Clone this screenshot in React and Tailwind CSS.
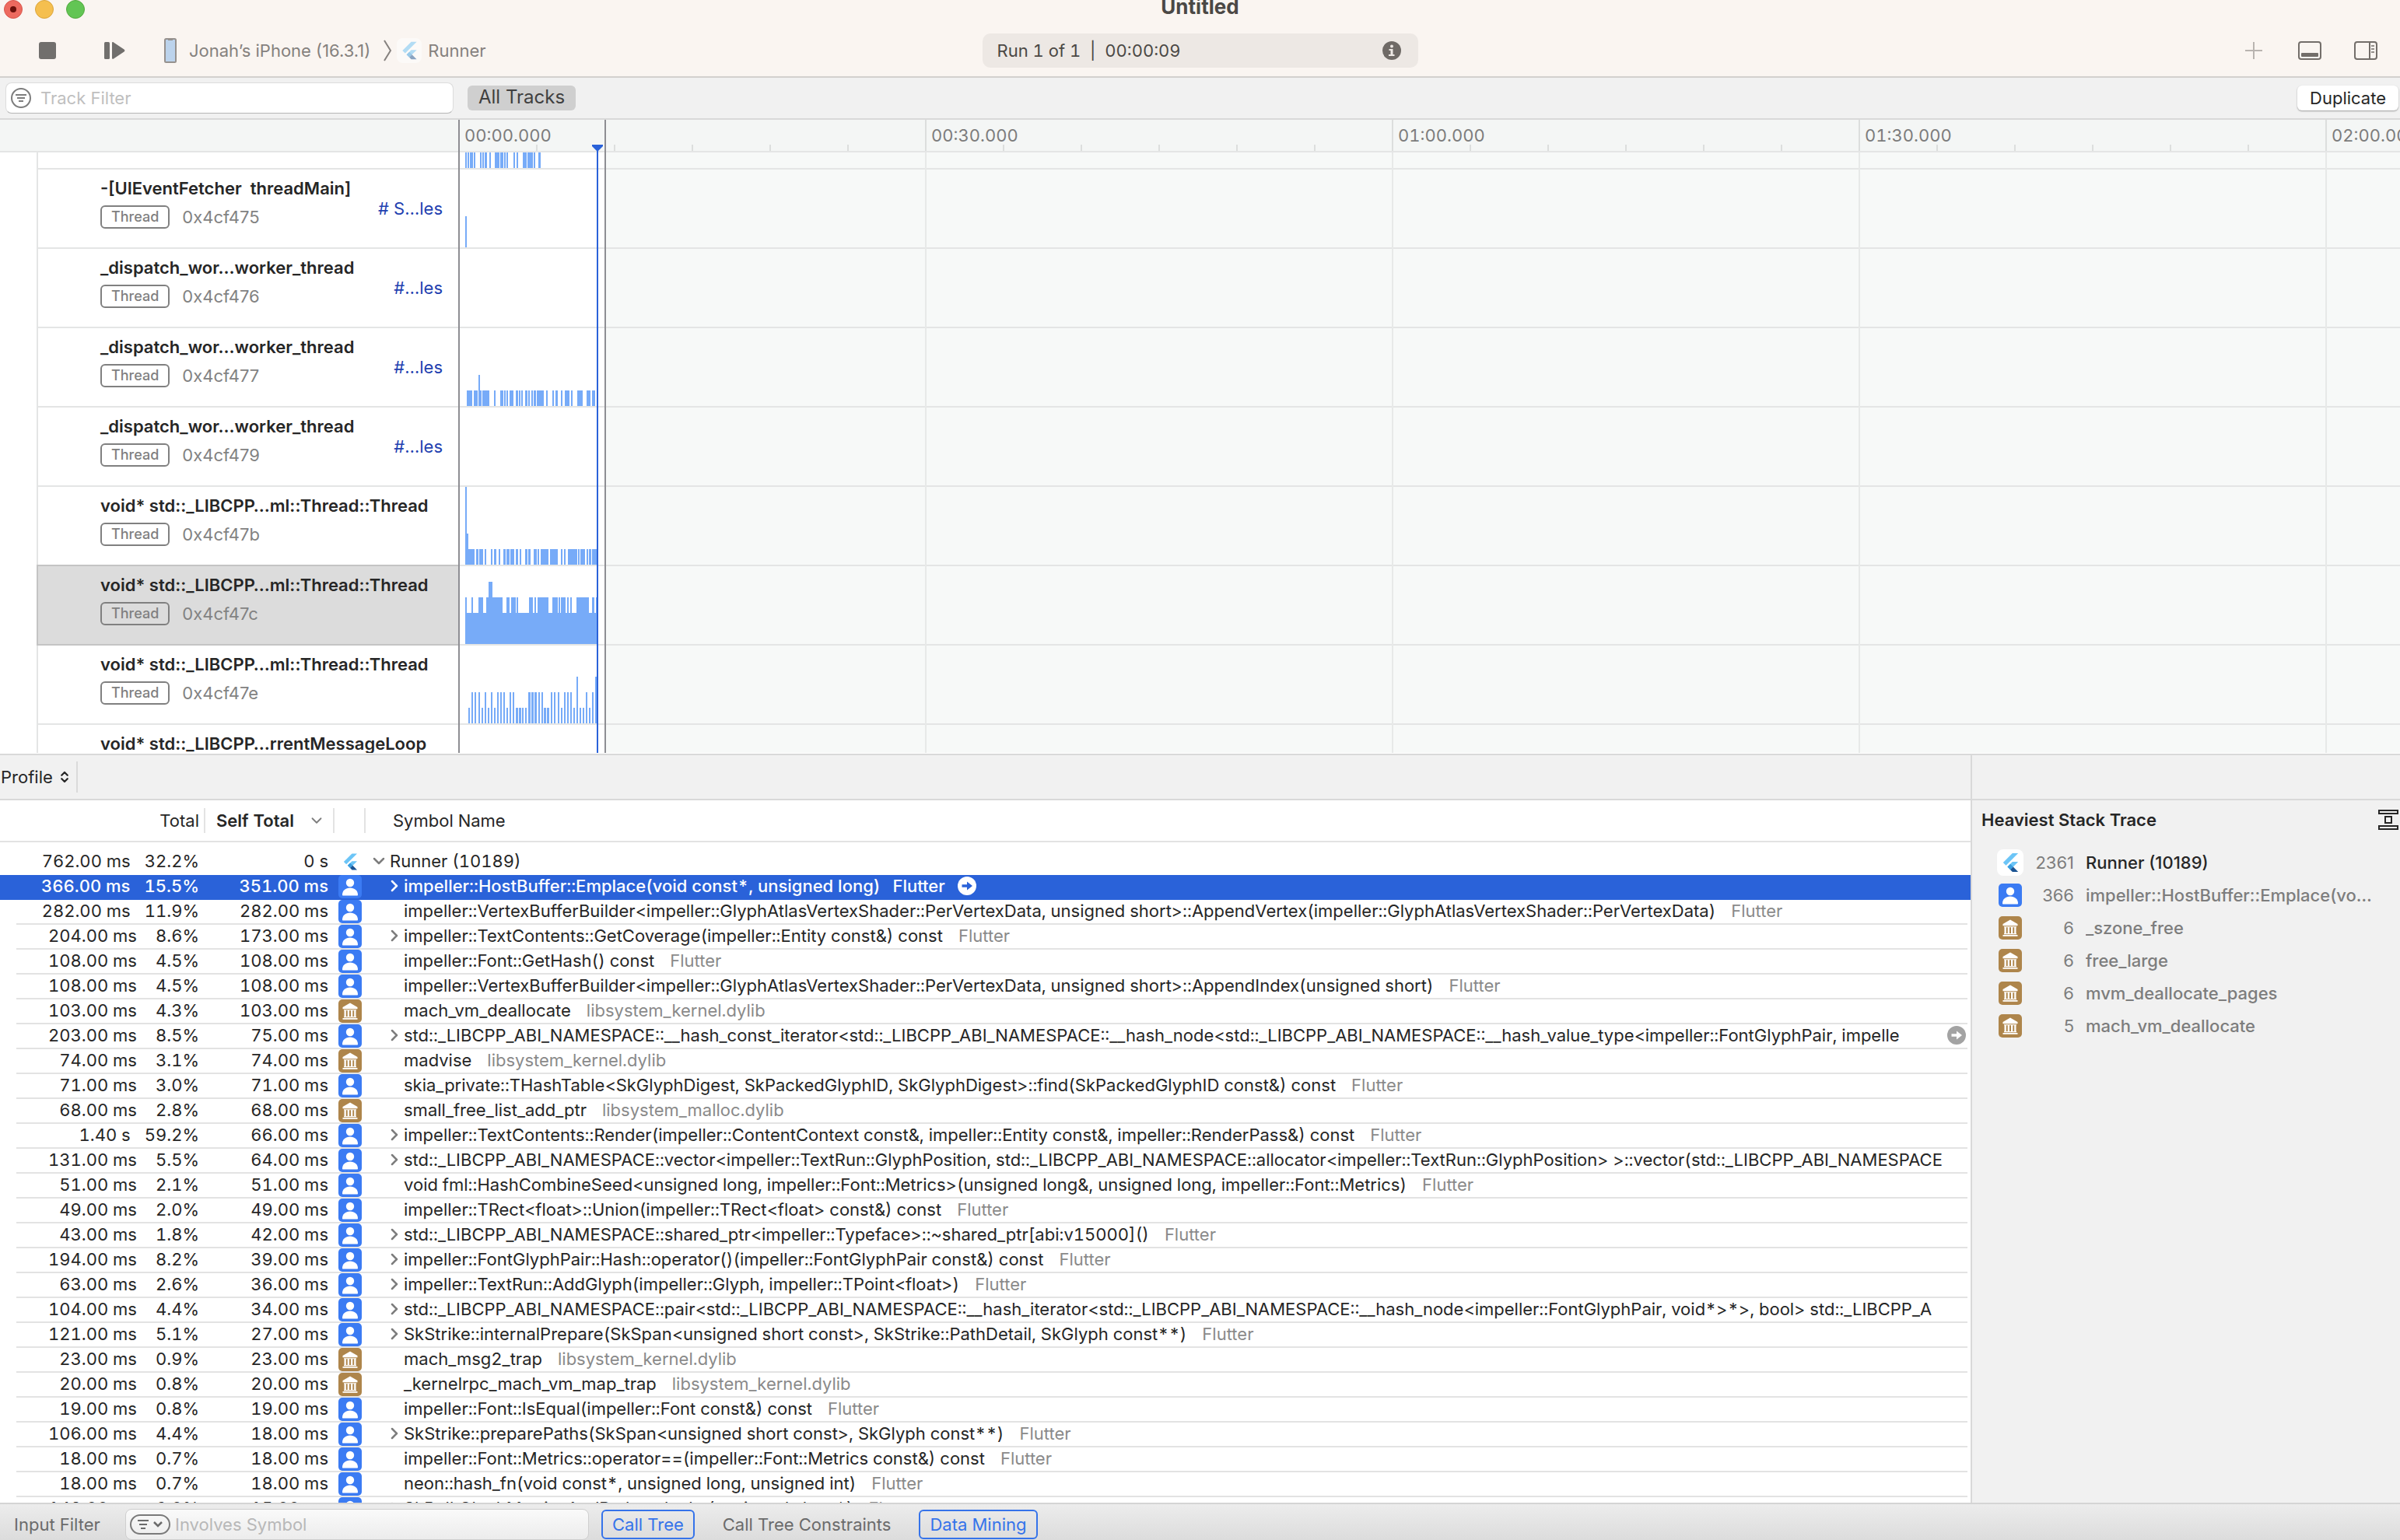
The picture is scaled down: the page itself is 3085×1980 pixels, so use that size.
import { ChevronDown, ChevronRight, ChevronsUpDown } from 'lucide-react';

const TRACKS = [
  {
    name: '-[UIEventFetcher  threadMain]',
    address: '0x4cf475',
    link: '# S…les',
    bars: [[7, 2, 40]],
  },
  { name: '_dispatch_wor…worker_thread', address: '0x4cf476', link: '#…les', bars: [] },
  {
    name: '_dispatch_wor…worker_thread',
    address: '0x4cf477',
    link: '#…les',
    bars: [
      [24, 2, 40], [9, 7, 20], [18, 5, 20], [24, 4, 20], [29, 9, 20], [44, 2, 20], [52, 4, 20], [57, 2, 20],
      [60, 2, 20], [64, 5, 20], [72, 3, 20], [76, 2, 20], [79, 2, 20], [84, 3, 20], [88, 2, 20], [92, 2, 20],
      [95, 3, 20], [99, 9, 20], [111, 2, 20], [119, 2, 20], [123, 3, 20], [130, 2, 20], [135, 6, 20],
      [143, 2, 20], [151, 7, 20], [163, 5, 20], [170, 4, 20],
    ],
  },
  { name: '_dispatch_wor…worker_thread', address: '0x4cf479', link: '#…les', bars: [] },
  {
    name: 'void* std::_LIBCPP…ml::Thread::Thread',
    address: '0x4cf47b',
    bars: [
      [7, 2, 100], [9, 2, 40], [11, 8, 20], [21, 3, 20], [25, 5, 20], [32, 2, 20], [40, 2, 20], [44, 3, 20],
      [50, 2, 20], [56, 3, 20], [60, 4, 20], [65, 5, 20], [72, 3, 20], [77, 2, 20], [84, 3, 20], [88, 3, 20],
      [95, 4, 20], [100, 2, 20], [104, 10, 20], [116, 10, 20], [130, 2, 20], [134, 2, 20], [139, 12, 20],
      [152, 2, 20], [155, 6, 20], [163, 2, 20], [166, 3, 20], [170, 6, 20],
    ],
  },
  {
    name: 'void* std::_LIBCPP…ml::Thread::Thread',
    address: '0x4cf47c',
    selected: true,
    bars: [
      [7, 169, 40], [7, 2, 60], [15, 2, 60], [24, 6, 60], [34, 21, 60], [37, 5, 80], [60, 4, 60], [66, 6, 60],
      [73, 2, 60], [89, 5, 60], [96, 2, 60], [100, 14, 60], [119, 7, 60], [127, 2, 60], [130, 6, 60],
      [138, 2, 60], [142, 2, 60], [150, 16, 60], [170, 3, 60], [175, 1, 60],
    ],
  },
  {
    name: 'void* std::_LIBCPP…ml::Thread::Thread',
    address: '0x4cf47e',
    bars: [
      [11, 2, 20], [15, 2, 40], [19, 2, 40], [24, 2, 40], [28, 2, 20], [32, 2, 40], [36, 2, 20], [40, 2, 40],
      [44, 2, 20], [48, 2, 40], [52, 2, 40], [56, 2, 40], [60, 2, 20], [64, 2, 40], [68, 2, 40], [72, 3, 20],
      [76, 3, 20], [80, 2, 20], [84, 2, 20], [88, 3, 40], [92, 3, 40], [96, 3, 40], [101, 2, 40], [105, 2, 40],
      [108, 3, 20], [112, 3, 20], [117, 2, 40], [121, 2, 40], [126, 2, 40], [130, 2, 20], [134, 2, 40],
      [138, 2, 40], [142, 2, 40], [146, 2, 20], [150, 2, 60], [154, 2, 20], [158, 2, 20], [162, 2, 40],
      [166, 2, 20], [170, 2, 40], [174, 2, 60],
    ],
  },
];

const TOP_BARS = [
  [7, 2, 20], [10, 2, 20], [13, 4, 20], [18, 2, 20], [26, 2, 20], [29, 2, 20], [32, 3, 20], [38, 2, 20],
  [45, 6, 20], [52, 4, 20], [57, 2, 20], [60, 2, 20], [69, 2, 20], [73, 2, 20], [81, 5, 20], [87, 7, 20],
  [95, 2, 20], [101, 3, 20],
];

const TIMES = ['00:00.000', '00:30.000', '01:00.000', '01:30.000', '02:00.000'];

const ROWS = [
  { total: '282.00 ms', pct: '11.9%', self: '282.00 ms', icon: 'user', name: 'impeller::VertexBufferBuilder<impeller::GlyphAtlasVertexShader::PerVertexData, unsigned short>::AppendVertex(impeller::GlyphAtlasVertexShader::PerVertexData)', lib: 'Flutter' },
  { total: '204.00 ms', pct: '8.6%', self: '173.00 ms', icon: 'user', open: true, name: 'impeller::TextContents::GetCoverage(impeller::Entity const&) const', lib: 'Flutter' },
  { total: '108.00 ms', pct: '4.5%', self: '108.00 ms', icon: 'user', name: 'impeller::Font::GetHash() const', lib: 'Flutter' },
  { total: '108.00 ms', pct: '4.5%', self: '108.00 ms', icon: 'user', name: 'impeller::VertexBufferBuilder<impeller::GlyphAtlasVertexShader::PerVertexData, unsigned short>::AppendIndex(unsigned short)', lib: 'Flutter' },
  { total: '103.00 ms', pct: '4.3%', self: '103.00 ms', icon: 'system', name: 'mach_vm_deallocate', lib: 'libsystem_kernel.dylib' },
  { total: '203.00 ms', pct: '8.5%', self: '75.00 ms', icon: 'user', open: true, focus: true, name: 'std::_LIBCPP_ABI_NAMESPACE::__hash_const_iterator<std::_LIBCPP_ABI_NAMESPACE::__hash_node<std::_LIBCPP_ABI_NAMESPACE::__hash_value_type<impeller::FontGlyphPair, impelle' },
  { total: '74.00 ms', pct: '3.1%', self: '74.00 ms', icon: 'system', name: 'madvise', lib: 'libsystem_kernel.dylib' },
  { total: '71.00 ms', pct: '3.0%', self: '71.00 ms', icon: 'user', name: 'skia_private::THashTable<SkGlyphDigest, SkPackedGlyphID, SkGlyphDigest>::find(SkPackedGlyphID const&) const', lib: 'Flutter' },
  { total: '68.00 ms', pct: '2.8%', self: '68.00 ms', icon: 'system', name: 'small_free_list_add_ptr', lib: 'libsystem_malloc.dylib' },
  { total: '1.40 s', pct: '59.2%', self: '66.00 ms', icon: 'user', open: true, name: 'impeller::TextContents::Render(impeller::ContentContext const&, impeller::Entity const&, impeller::RenderPass&) const', lib: 'Flutter' },
  { total: '131.00 ms', pct: '5.5%', self: '64.00 ms', icon: 'user', open: true, name: 'std::_LIBCPP_ABI_NAMESPACE::vector<impeller::TextRun::GlyphPosition, std::_LIBCPP_ABI_NAMESPACE::allocator<impeller::TextRun::GlyphPosition> >::vector(std::_LIBCPP_ABI_NAMESPACE' },
  { total: '51.00 ms', pct: '2.1%', self: '51.00 ms', icon: 'user', name: 'void fml::HashCombineSeed<unsigned long, impeller::Font::Metrics>(unsigned long&, unsigned long, impeller::Font::Metrics)', lib: 'Flutter' },
  { total: '49.00 ms', pct: '2.0%', self: '49.00 ms', icon: 'user', name: 'impeller::TRect<float>::Union(impeller::TRect<float> const&) const', lib: 'Flutter' },
  { total: '43.00 ms', pct: '1.8%', self: '42.00 ms', icon: 'user', open: true, name: 'std::_LIBCPP_ABI_NAMESPACE::shared_ptr<impeller::Typeface>::~shared_ptr[abi:v15000]()', lib: 'Flutter' },
  { total: '194.00 ms', pct: '8.2%', self: '39.00 ms', icon: 'user', open: true, name: 'impeller::FontGlyphPair::Hash::operator()(impeller::FontGlyphPair const&) const', lib: 'Flutter' },
  { total: '63.00 ms', pct: '2.6%', self: '36.00 ms', icon: 'user', open: true, name: 'impeller::TextRun::AddGlyph(impeller::Glyph, impeller::TPoint<float>)', lib: 'Flutter' },
  { total: '104.00 ms', pct: '4.4%', self: '34.00 ms', icon: 'user', open: true, name: 'std::_LIBCPP_ABI_NAMESPACE::pair<std::_LIBCPP_ABI_NAMESPACE::__hash_iterator<std::_LIBCPP_ABI_NAMESPACE::__hash_node<impeller::FontGlyphPair, void*>*>, bool> std::_LIBCPP_A' },
  { total: '121.00 ms', pct: '5.1%', self: '27.00 ms', icon: 'user', open: true, name: 'SkStrike::internalPrepare(SkSpan<unsigned short const>, SkStrike::PathDetail, SkGlyph const**)', lib: 'Flutter' },
  { total: '23.00 ms', pct: '0.9%', self: '23.00 ms', icon: 'system', name: 'mach_msg2_trap', lib: 'libsystem_kernel.dylib' },
  { total: '20.00 ms', pct: '0.8%', self: '20.00 ms', icon: 'system', name: '_kernelrpc_mach_vm_map_trap', lib: 'libsystem_kernel.dylib' },
  { total: '19.00 ms', pct: '0.8%', self: '19.00 ms', icon: 'user', name: 'impeller::Font::IsEqual(impeller::Font const&) const', lib: 'Flutter' },
  { total: '106.00 ms', pct: '4.4%', self: '18.00 ms', icon: 'user', open: true, name: 'SkStrike::preparePaths(SkSpan<unsigned short const>, SkGlyph const**)', lib: 'Flutter' },
  { total: '18.00 ms', pct: '0.7%', self: '18.00 ms', icon: 'user', name: 'impeller::Font::Metrics::operator==(impeller::Font::Metrics const&) const', lib: 'Flutter' },
  { total: '18.00 ms', pct: '0.7%', self: '18.00 ms', icon: 'user', name: 'neon::hash_fn(void const*, unsigned long, unsigned int)', lib: 'Flutter' },
  { total: '142.00 ms', pct: '6.0%', self: '15.00 ms', icon: 'user', open: true, name: 'SkBulkGlyphMetricsAndPaths::glyphs(unsigned short*)', lib: 'Flutter' },
];

const STACK = [
  { icon: 'user', count: 366, name: 'impeller::HostBuffer::Emplace(void const*, unsigned long)' },
  { icon: 'system', count: 6, name: '_szone_free' },
  { icon: 'system', count: 6, name: 'free_large' },
  { icon: 'system', count: 6, name: 'mvm_deallocate_pages' },
  { icon: 'system', count: 5, name: 'mach_vm_deallocate' },
];

function FlutterIcon({ className }) {
  return (
    <svg viewBox="0 0 34 34" className={className}>
      <rect width="34" height="34" rx="8" fill="#fff" />
      <g transform="translate(5.5 5)">
        <path fill="#6cc5f7" d="M14.3 0 2.3 12 6 15.7 21.7 0z" />
        <path fill="#6cc5f7" d="M14.3 11.1 7.9 17.5l3.7 3.7 10.1-10.1z" />
        <path fill="#3a9ee0" d="m7.9 17.5 3.7-3.7 3.7 3.7-3.7 3.7z" />
        <path fill="#1c5493" d="m11.6 21.2 3.7-3.7 6.4 6.5h-7.4z" />
      </g>
    </svg>
  );
}

function SymbolIcon({ kind }) {
  if (kind === 'flutter') return <FlutterIcon className="block size-[30px] shrink-0" />;
  if (kind === 'user') {
    return (
      <svg viewBox="0 0 30 30" className="block size-[30px] shrink-0">
        <rect width="30" height="30" rx="5" fill="#3b7bf3" />
        <circle cx="15" cy="10" r="5.2" fill="#fff" />
        <path fill="#fff" d="M5 25.5c0-5.5 4.2-9 10-9s10 3.500 10 9c0 .6-.4 1-1 1H6c-.6 0-1-.4-1-1z" />
      </svg>
    );
  }
  return (
    <svg viewBox="0 0 30 30" className="block size-[30px] shrink-0">
      <rect width="30" height="30" rx="5" fill="#ae854b" />
      <path fill="#fff" d="M15 4.500 24.500 10v2.200h-19V10zM7 13.300h16v1H7zM7.500 14h2.300v8.500H7.500zM11.700 14H14v8.500h-2.300zM16 14h2.300v8.500H16zM20.200 14h2.300v8.500h-2.300zM7 22h16v1.200H7zM5.500 24h19v1.800h-19z" />
    </svg>
  );
}

function FocusArrow({ className }) {
  return (
    <svg viewBox="0 0 24 24" className={className}>
      <circle cx="12" cy="12" r="12" fill="currentColor" />
      <path className="fill-(--arrow)" d="M5.500 10.200h6.500V6.500l7 5.500-7 5.500v-3.700H5.500z" />
    </svg>
  );
}

function Bars({ bars, height }) {
  return (
    <svg width="186" height={height} className="block shrink-0 bg-white" fill="#77abf8" shapeRendering="crispEdges">
      {bars.map(([x, w, h], i) => (
        <rect key={i} x={x} y={height - h} width={w} height={h} />
      ))}
    </svg>
  );
}

function Toolbar() {
  return (
    <header className="border-b-2 border-[#d3d0ce] bg-[#faf5f1]">
      <div className="grid h-5 grid-cols-[1fr_auto_1fr] items-center">
        <div className="flex gap-4 pl-[5px]">
          <button aria-label="Close" className="flex size-6 items-center justify-center rounded-full border border-[#d9564c] bg-[#ed6a5f]">
            <span className="size-2 rounded-full bg-[#6b110b]" />
          </button>
          <button aria-label="Minimize" className="size-6 rounded-full border border-[#dba53c] bg-[#f5bf4f]" />
          <button aria-label="Zoom" className="size-6 rounded-full border border-[#52a93f] bg-[#62c554]" />
        </div>
        <h1 className="self-start text-[26px] leading-[18px] font-bold text-[#4b4845]">Untitled</h1>
      </div>

      <div className="mt-3 grid h-[66px] grid-cols-[1fr_560px_1fr] items-center text-[#85817e]">
        <div className="flex items-center">
          <button aria-label="Stop" className="ml-[50px] size-[22px] rounded-[3px] bg-[#716f6d]" />
          <button aria-label="Pause" className="ml-[62px] text-[#716f6d]">
            <svg width="27" height="22" viewBox="0 0 27 22" fill="currentColor" className="block">
              <rect width="7" height="22" rx="1.500" />
              <path d="M10 1.500c0-1.300 1-1.800 2-1l13.500 9c1.200.8 1.200 2.200 0 3l-13.500 9c-1 .8-2 .3-2-1z" />
            </svg>
          </button>
          <svg width="16" height="32" viewBox="0 0 16 32" className="ml-[50px] block">
            <rect x="1" y="1" width="14" height="30" rx="1.500" fill="#bcd3ec" stroke="#96918e" strokeWidth="2" />
            <rect x="5" y="1" width="6" height="2" fill="#96918e" />
          </svg>
          <span className="ml-4 text-[22px]">Jonah’s iPhone (16.3.1)</span>
          <svg width="12" height="28" viewBox="0 0 12 28" fill="none" stroke="currentColor" strokeWidth="2" className="ml-4 block">
            <path d="M2 1l8 13-8 13" />
          </svg>
          <FlutterIcon className="ml-1.5 block size-8 opacity-50" />
          <span className="ml-2 text-[22px]">Runner</span>
        </div>

        <div className="flex h-11 items-center justify-between rounded-[10px] bg-[#ede8e4] pr-[22px] pl-[19px]">
          <span className="text-[22px] whitespace-pre text-[#4b4845] tabular-nums">Run 1 of 1  |  00:00:09</span>
          <button aria-label="Run info">
            <svg width="24" height="24" viewBox="0 0 24 24" className="block">
              <circle cx="12" cy="12" r="12" fill="#6f6a66" />
              <circle cx="12" cy="6.500" r="2" fill="#ede8e4" />
              <path fill="#ede8e4" d="M8.500 10h5v7h2v2h-7.500v-2h2.500v-5h-2z" />
            </svg>
          </button>
        </div>

        <div className="flex items-center justify-end gap-[42px] pr-[29px] text-[#736e6a]">
          <button aria-label="Add instrument" className="mr-1 text-[#b9b4b0]">
            <svg width="22" height="22" viewBox="0 0 22 22" stroke="currentColor" strokeWidth="2" className="block">
              <path d="M11 0v22M0 11h22" />
            </svg>
          </button>
          <button aria-label="Toggle detail area">
            <svg width="30" height="24" viewBox="0 0 30 24" fill="none" className="block">
              <rect x="1" y="1" width="28" height="22" rx="3" stroke="currentColor" strokeWidth="2" />
              <rect x="4" y="15" width="22" height="5" rx="1" fill="currentColor" />
            </svg>
          </button>
          <button aria-label="Toggle inspector">
            <svg width="30" height="24" viewBox="0 0 30 24" fill="none" stroke="currentColor" strokeWidth="2" className="block">
              <rect x="1" y="1" width="28" height="22" rx="3" />
              <path d="M20 1v22" />
              <path strokeWidth="1.500" d="M22 6h4M22 10h4M22 14h4" />
            </svg>
          </button>
        </div>
      </div>
    </header>
  );
}

function FilterBar() {
  return (
    <div className="flex h-[54px] items-center justify-between border-b-2 border-[#d9d9d9] bg-[#f1f1f1] pr-0.5 pl-[7px]">
      <div className="flex items-center gap-[18px]">
        <label className="flex h-10 w-[576px] items-center gap-3 rounded-lg border border-[#dcdcdc] border-b-[#b5b5b5] bg-white pl-1.5">
          <svg width="26" height="26" viewBox="0 0 26 26" fill="none" stroke="#7d7d7d" strokeWidth="2" className="block shrink-0">
            <circle cx="13" cy="13" r="12" />
            <path d="M6 9h14M8 13h10M10 17h6" />
          </svg>
          <input aria-label="Track filter" placeholder="Track Filter" className="min-w-0 flex-1 text-[22px] outline-none placeholder:text-[#bfbfbf]" />
        </label>
        <button className="h-8 rounded-md bg-[#cfcfcf] px-3.5 pb-0.5 text-2xl leading-[30px] text-[#3f3f3f]">All Tracks</button>
      </div>
      <button className="h-8 rounded-md bg-white px-4 text-[22px] leading-8 text-[#262626] shadow-[0_1px_2px_rgba(0,0,0,0.35)]">Duplicate</button>
    </div>
  );
}

function Timeline() {
  return (
    <section className="relative overflow-hidden border-b-2 border-[#d9d9d9] bg-white pb-px">
      {/* Ruler */}
      <div className="flex h-[42px] border-b-2 border-[#e4e5e5] bg-[#f4f6f5] text-[22px] text-[#7c7c7c]">
        <div className="w-[589px] shrink-0" />
        <div className="flex min-w-0 flex-1 overflow-hidden">
          {TIMES.map((time) => (
            <div key={time} className="flex w-[600px] shrink-0 flex-col justify-between border-l-2 border-[#dcdedd]">
              <span className="h-8 pt-[5px] pl-1.5 leading-[30px] tabular-nums">{time}</span>
              <div className="flex h-2">
                <span className="w-[98px] shrink-0" />
                <span className="w-[100px] border-l-2 border-[#dcdedd]" />
                <span className="w-[100px] border-l-2 border-[#dcdedd]" />
                <span className="w-[100px] border-l-2 border-[#dcdedd]" />
                <span className="w-[100px] border-l-2 border-[#dcdedd]" />
                <span className="w-[100px] border-l-2 border-[#dcdedd]" />
              </div>
            </div>
          ))}
        </div>
      </div>

      {/* Tracks */}
      <div className="relative">
        <div className="flex">
          <div className="w-[47px] shrink-0" />
          <div className="w-[544px] shrink-0 border-b-2 border-l-2 border-[#e4e5e5]" />
          <div className="flex flex-1 border-b-2 border-[#e4e5e5] bg-[#f7f9f8]">
            <Bars bars={TOP_BARS} height={20} />
          </div>
        </div>
        {TRACKS.map((track) => (
          <div key={track.address} className="flex">
            <div className="w-[47px] shrink-0" />
            <div
              className={`flex w-[544px] shrink-0 items-center justify-between border-b-2 border-l-2 pr-[22px] pl-20 ${
                track.selected ? 'border-[#c4c4c4] bg-[#dcdcdc] shadow-[0_-2px_0_#c4c4c4]' : 'border-[#e4e5e5]'
              }`}
            >
              <div className="h-[100px] pt-2.5 whitespace-pre">
                <div className="text-[22px] leading-7 font-semibold text-[#262626]">{track.name}</div>
                <div className="mt-2 flex items-center gap-4">
                  <span className="h-[30px] rounded-md border-2 border-[#808080] px-3 text-lg leading-[26px] font-medium text-[#808080]">Thread</span>
                  <span className="text-[22px] leading-[30px] text-[#828282]">{track.address}</span>
                </div>
              </div>
              {track.link && <a href="#samples" className="text-[22px] text-[#1f41b0]">{track.link}</a>}
            </div>
            <div className="flex flex-1 border-b-2 border-[#e4e5e5] bg-[#f7f9f8]">
              <Bars bars={track.bars} height={100} />
            </div>
          </div>
        ))}
        <div className="flex h-9 overflow-hidden">
          <div className="w-[47px] shrink-0" />
          <div className="w-[544px] shrink-0 border-l-2 border-[#e4e5e5] pt-2.5 pl-20 text-[22px] leading-7 font-semibold text-[#262626]">
            void* std::_LIBCPP…rrentMessageLoop
          </div>
          <div className="flex flex-1 bg-[#f7f9f8]">
            <Bars bars={[]} height={36} />
          </div>
        </div>

        {/* Minute grid over the lanes */}
        <div className="pointer-events-none absolute inset-y-0 right-0 left-[589px] flex overflow-hidden">
          {TIMES.map((time, i) => (
            <div key={time} className={`w-[600px] shrink-0 ${i > 0 ? 'border-l-2 border-[#e7e9e8]' : ''}`} />
          ))}
        </div>
      </div>

      {/* Run bounds and playhead */}
      <div className="absolute top-0 bottom-px left-[589px] w-[190px] border-x-2 border-[#8e8e93]" />
      <div className="absolute top-8 bottom-px left-[761px] flex w-3.5 flex-col items-center">
        <svg width="14" height="8" viewBox="0 0 14 8" fill="#2a62d9" className="block shrink-0">
          <path d="M0 0h14v2L8 8H6L0 2z" />
        </svg>
        <div className="w-0.5 flex-1 bg-[#2a62d9]" />
      </div>
    </section>
  );
}

function Cells({ row, selected }) {
  const line = selected ? 'border-b-2 border-[#2a62d9]' : 'border-b-2 border-[#e3e3e3]';
  return (
    <>
      <td />
      <td className={`pr-2 text-right ${line}`}>
        {row.total}
        <span className={row.pct.length > 4 ? 'ml-[18px]' : 'ml-6'}>{row.pct}</span>
      </td>
      <td className={`pr-2 text-right ${line}`}>{row.self}</td>
      <td className={`pl-[5px] ${line}`}>
        <SymbolIcon kind={row.icon} />
      </td>
      <td className={line}>
        <div className="flex items-center">
          <span className={`flex w-[49px] shrink-0 justify-end ${selected ? 'text-white' : 'text-[#7d7d7d]'}`}>
            {row.open && <ChevronRight className="size-6" strokeWidth={2.5} />}
          </span>
          <span className={row.focus ? 'min-w-0 flex-1 overflow-hidden' : ''}>{row.name}</span>
          {row.lib && <span className={selected ? 'ml-4' : 'ml-5 text-[#8a8a8a]'}>{row.lib}</span>}
          {selected && <FocusArrow className="ml-4 size-6 text-white [--arrow:#2a62d9]" />}
          {row.focus && <FocusArrow className="mr-0.5 size-6 shrink-0 text-[#a3a3a3] [--arrow:#fff]" />}
        </div>
      </td>
      <td />
    </>
  );
}

function CallTree() {
  return (
    <table className="w-full table-fixed border-separate border-spacing-0 text-[22px] leading-7 whitespace-nowrap text-[#262626] tabular-nums [&_td]:h-8 [&_td]:overflow-hidden [&_td]:py-0 [&_td]:align-top">
      <colgroup>
        <col className="w-[21px]" />
        <col className="w-[243px]" />
        <col className="w-[166px]" />
        <col className="w-10" />
        <col />
        <col className="w-1" />
      </colgroup>
      <thead className="[&_th]:h-[54px] [&_th]:border-b-2 [&_th]:border-[#e3e3e3] [&_th]:p-0 [&_th]:font-normal">
        <tr>
          <th />
          <th><div className="border-r-2 border-[#e3e3e3] pr-1.5 text-right leading-8">Total</div></th>
          <th>
            <div className="flex items-center justify-between border-r-2 border-[#e3e3e3] pr-2.5 pl-3.5 leading-8 font-semibold">
              Self Total
              <ChevronDown className="size-[22px] text-[#7d7d7d]" />
            </div>
          </th>
          <th><div className="h-8 border-r-2 border-[#e3e3e3]" /></th>
          <th className="text-left"><div className="pl-[35px]">Symbol Name</div></th>
          <th />
        </tr>
      </thead>
      <tbody>
        <tr>
          <td colSpan={6} className="h-2.5!" />
        </tr>
        <tr>
          <td />
          <td className="pr-2 text-right">762.00 ms<span className="ml-[18px]">32.2%</span></td>
          <td className="pr-2 text-right">0 s</td>
          <td className="pl-[5px]"><SymbolIcon kind="flutter" /></td>
          <td>
            <div className="flex items-center pl-[5px]">
              <ChevronDown className="mr-0.5 size-6 text-[#7d7d7d]" strokeWidth={2.5} />
              Runner (10189)
            </div>
          </td>
          <td />
        </tr>
        <tr className="bg-[#2a62d9] font-medium text-white">
          <Cells
            selected
            row={{ total: '366.00 ms', pct: '15.5%', self: '351.00 ms', icon: 'user', open: true, name: 'impeller::HostBuffer::Emplace(void const*, unsigned long)', lib: 'Flutter' }}
          />
        </tr>
        {ROWS.map((row) => (
          <tr key={row.name}>
            <Cells row={row} />
          </tr>
        ))}
      </tbody>
    </table>
  );
}

function StackTrace() {
  return (
    <aside className="w-[552px] shrink-0 border-l-2 border-[#d9d9d9] bg-[#f1f1f1] text-[22px]">
      <div className="flex h-[50px] items-center justify-between pr-0.5 pl-3">
        <h2 className="font-semibold text-[#262626]">Heaviest Stack Trace</h2>
        <button aria-label="Collapse stack">
          <svg width="26" height="26" viewBox="0 0 26 26" fill="none" stroke="#262626" strokeWidth="2" className="block">
            <path d="M1 1h24v4H1zM1 21h24v4H1zM9 9h8v8H9z" />
          </svg>
        </button>
      </div>
      <ul className="pt-[9px] font-medium text-[#7d7d7d]">
        <li className="flex h-[42px] items-center pl-8">
          <FlutterIcon className="block size-[34px]" />
          <span className="w-[65px] text-right font-normal">2361</span>
          <span className="ml-[15px] text-[#262626]">Runner (10189)</span>
        </li>
        {STACK.map((frame) => (
          <li key={frame.name} className="flex h-[42px] items-center pr-9 pl-[34px]">
            <SymbolIcon kind={frame.icon} />
            <span className="w-[67px] shrink-0 text-right font-normal">{frame.count}</span>
            <span className="ml-[15px] truncate">{frame.name}</span>
          </li>
        ))}
      </ul>
    </aside>
  );
}

function BottomBar() {
  return (
    <footer className="flex h-12 shrink-0 items-center border-t-2 border-[#d4d4d4] bg-linear-to-b from-[#ececec] to-[#dcdcdc] pt-1.5 text-[22px] text-[#6b6b6b]">
      <label htmlFor="input-filter" className="ml-[18px] w-[143px]">Input Filter</label>
      <div className="flex h-10 w-[596px] items-center gap-1.5 rounded-lg border border-[#cfcfcf] bg-linear-to-b from-[#fafafa] to-[#ececec] pl-[5px]">
        <button aria-label="Filter options" className="flex h-[26px] w-[52px] items-center justify-center gap-1.5 rounded-full border-2 border-[#7a7a7a]">
          <svg width="14" height="12" viewBox="0 0 14 12" stroke="#6b6b6b" strokeWidth="2">
            <path d="M0 1h14M2 6h10M4 11h6" />
          </svg>
          <svg width="12" height="8" viewBox="0 0 12 8" fill="none" stroke="#6b6b6b" strokeWidth="2.500">
            <path d="m1 1 5 5 5-5" />
          </svg>
        </button>
        <input id="input-filter" placeholder="Involves Symbol" className="min-w-0 flex-1 outline-none placeholder:text-[#b8b8b8]" />
      </div>
      <button className="ml-4 h-[38px] rounded-md border-2 border-[#3573ea] px-3 text-[#3573ea]">Call Tree</button>
      <button className="mx-9 h-[38px]">Call Tree Constraints</button>
      <button className="h-[38px] rounded-md border-2 border-[#3573ea] px-3 text-[#3573ea]">Data Mining</button>
    </footer>
  );
}

export default function App() {
  return (
    <div className="flex h-screen flex-col overflow-hidden bg-white font-[Inter,sans-serif]">
      <Toolbar />
      <FilterBar />
      <Timeline />
      <div className="flex h-[58px] shrink-0 border-b-2 border-[#d9d9d9] bg-[#f1f1f1]">
        <div className="flex flex-1 items-center">
          <label className="flex h-10 items-center gap-1.5 border-r-2 border-[#dadada] pr-1.5 pl-px text-[22px] text-[#262626]">
            <select aria-label="Detail view" className="appearance-none outline-none">
              <option>Profile</option>
            </select>
            <ChevronsUpDown className="size-[18px]" strokeWidth={3} />
          </label>
        </div>
        <div className="w-[552px] border-l-2 border-[#d9d9d9]" />
      </div>
      <main className="flex min-h-0 flex-1 overflow-hidden">
        <div className="min-w-0 flex-1 overflow-hidden">
          <CallTree />
        </div>
        <StackTrace />
      </main>
      <BottomBar />
    </div>
  );
}
